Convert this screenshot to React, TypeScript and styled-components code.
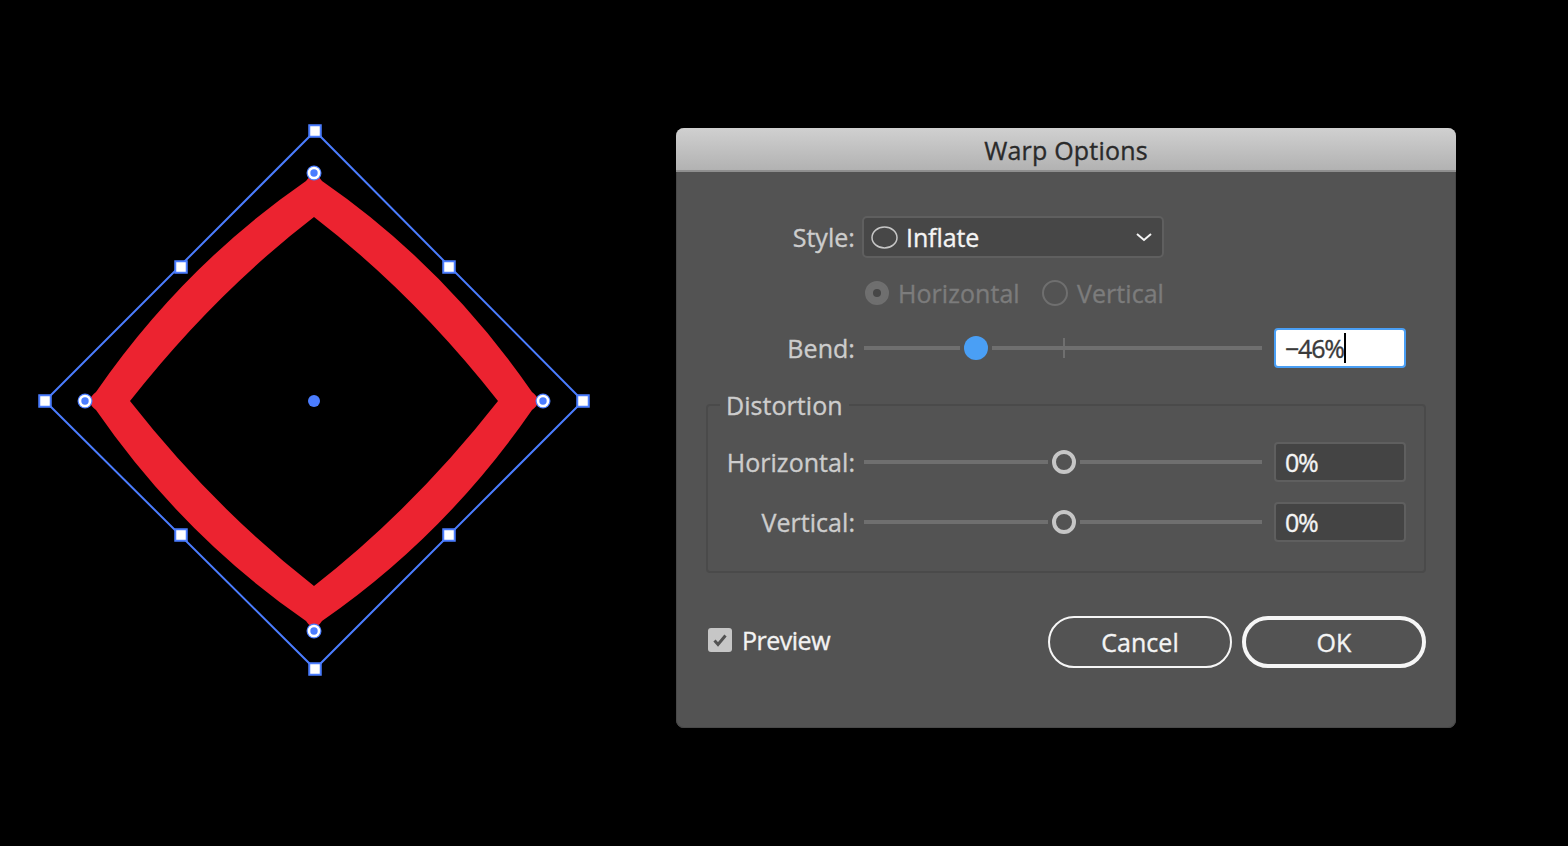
import React from 'react'
import styled, { createGlobalStyle } from 'styled-components'

const GlobalStyle = createGlobalStyle`
  html, body {
    margin: 0;
    padding: 0;
    background: #000;
  }
`

const BLUE = '#4b7dff'

const Page = styled.div`
  display: flex;
  align-items: flex-start;
  width: 1568px;
  height: 846px;
  overflow: hidden;
  background: #000;
  font-family: 'Open Sans', 'Noto Sans', sans-serif;
  letter-spacing: 0.05px;
  -webkit-text-stroke: 0.35px;
`

const Artboard = styled.svg`
  display: block;
  flex: none;
  width: 640px;
  height: 846px;
`

const Dialog = styled.div`
  flex: none;
  box-sizing: border-box;
  width: 780px;
  height: 600px;
  margin: 128px 0 0 36px;
  border-radius: 8px;
  overflow: hidden;
  background: #535353;
  box-shadow: inset 0 0 0 1px #484848;
`

const TitleBar = styled.div`
  box-sizing: border-box;
  height: 44px;
  border-bottom: 2px solid #8f8f8f;
  background: linear-gradient(#d0d0d0, #b2b2b2);
  color: #2a2a2a;
  font-size: 25px;
  letter-spacing: 0.2px;
  line-height: 45px;
  text-align: center;
`

const Body = styled.div`
  padding: 44px 30px 0;
`

const Row = styled.div<{ $top?: number }>`
  display: flex;
  align-items: center;
  margin-top: ${(p) => p.$top ?? 0}px;
`

const Label = styled.div<{ $width?: number }>`
  flex: none;
  width: ${(p) => p.$width ?? 149}px;
  margin-right: 8px;
  color: #cdcdcd;
  font-size: 25px;
  line-height: 32px;
  text-align: right;
`

const SelectBox = styled.div`
  display: flex;
  align-items: center;
  box-sizing: border-box;
  width: 302px;
  height: 42px;
  margin-left: -1px;
  padding: 0 9px 0 7px;
  border: 2px solid #5f5f5f;
  border-radius: 5px;
  background: #474747;
  color: #f4f4f4;
  font-size: 25px;
`

const SelectText = styled.span`
  flex: 1;
  margin-left: 8px;
  letter-spacing: -0.1px;
  line-height: 38px;
`

const RadioGroup = styled.div`
  display: flex;
  align-items: center;
  margin-left: 159px;
`

const RadioDot = styled.span<{ $checked?: boolean }>`
  display: flex;
  flex: none;
  align-items: center;
  justify-content: center;
  box-sizing: border-box;
  width: ${(p) => (p.$checked ? 24 : 26)}px;
  height: ${(p) => (p.$checked ? 24 : 26)}px;
  border: 2px solid #6f6f6f;
  border-radius: 50%;
  background: ${(p) => (p.$checked ? '#6f6f6f' : 'transparent')};

  &::after {
    content: '';
    display: ${(p) => (p.$checked ? 'block' : 'none')};
    width: 8px;
    height: 8px;
    border-radius: 50%;
    background: #474747;
  }
`

const RadioText = styled.span<{ $width: number }>`
  width: ${(p) => p.$width}px;
  margin-left: 9px;
  color: #7c7c7c;
  font-size: 25px;
  line-height: 24px;
`

const Slider = styled.div`
  position: relative;
  display: flex;
  flex: none;
  align-items: center;
  width: 398px;
  margin-left: 1px;
  height: 24px;
`

const Track = styled.span<{ $width?: number }>`
  display: block;
  flex: ${(p) => (p.$width ? `0 0 ${p.$width}px` : '1')};
  height: 4px;
  background: #6f6f6f;
`

const Thumb = styled.span<{ $active?: boolean }>`
  flex: none;
  box-sizing: border-box;
  width: 24px;
  height: 24px;
  margin: 0 4px;
  border-radius: 50%;
  border: ${(p) => (p.$active ? 'none' : '4px solid #c6c6c6')};
  background: ${(p) => (p.$active ? '#4a9ff5' : 'transparent')};
`

const Tick = styled.span<{ $left: number }>`
  position: absolute;
  top: 2px;
  left: ${(p) => p.$left}px;
  width: 2px;
  height: 20px;
  background: #6f6f6f;
`

const NumberField = styled.div<{ $focused?: boolean }>`
  display: flex;
  align-items: center;
  flex: none;
  box-sizing: border-box;
  width: 132px;
  height: 40px;
  margin-left: 12px;
  padding-left: 9px;
  border: 2px solid ${(p) => (p.$focused ? '#4a9ff5' : '#5f5f5f')};
  border-radius: 4px;
  background: ${(p) => (p.$focused ? '#fff' : '#444')};
  color: ${(p) => (p.$focused ? '#3a3a3a' : '#f4f4f4')};
  font-size: 25px;
  letter-spacing: -1.2px;
`

const Caret = styled.span`
  width: 2px;
  height: 30px;
  background: #000;
`

const Group = styled.fieldset`
  box-sizing: border-box;
  margin: 24px 0 0;
  padding: 24px 0 29px;
  min-width: 0;
  border: 2px solid #4a4a4a;
  border-radius: 4px;
`

const GroupTitle = styled.legend`
  margin-left: 12px;
  padding: 0 6px;
  color: #cdcdcd;
  font-size: 25px;
  line-height: 26px;
`

const Footer = styled.div`
  display: flex;
  align-items: center;
  margin-top: 43px;
`

const CheckBox = styled.span`
  display: flex;
  flex: none;
  align-items: center;
  justify-content: center;
  width: 24px;
  height: 24px;
  margin: 0 0 4px 2px;
  border-radius: 3px;
  background: #c6c6c6;
`

const CheckText = styled.span`
  flex: 1;
  margin: 0 0 4px 10px;
  color: #f2f2f2;
  font-size: 25px;
  letter-spacing: -0.5px;
`

const PillButton = styled.button<{ $primary?: boolean }>`
  box-sizing: border-box;
  width: 184px;
  height: 52px;
  margin-left: ${(p) => (p.$primary ? 10 : 0)}px;
  padding: 0;
  border: ${(p) => (p.$primary ? 4 : 2)}px solid #f6f6f6;
  border-radius: 26px;
  background: transparent;
  color: #f4f4f4;
  font-family: inherit;
  letter-spacing: inherit;
  font-size: 25px;
`

const Handle = ({ x, y }: { x: number; y: number }) => (
  <rect x={x - 5.75} y={y - 5.75} width={11.5} height={11.5} fill='#fff' stroke={BLUE} strokeWidth={2} />
)

const Anchor = ({ x, y }: { x: number; y: number }) => (
  <g>
    <circle cx={x} cy={y} r={7.5} fill={BLUE} />
    <circle cx={x} cy={y} r={6.3} fill='#fff' />
    <circle cx={x} cy={y} r={3.7} fill={BLUE} />
  </g>
)

const handles = [
  [315, 131],
  [449, 267],
  [583, 401],
  [449, 535],
  [315, 669],
  [181, 535],
  [45, 401],
  [181, 267],
]

const anchors = [
  [314, 173],
  [543, 401],
  [314, 631],
  [85, 401],
]

const outerShape =
  'M306 181 Q314 169 322 181 Q445 266 532 392 Q544 401 532 410 Q445 536 322 621 Q314 633 306 621 Q183 536 96 410 Q84 401 96 392 Q183 266 306 181 Z'
const innerShape =
  'M314 217 Q414 294 498 401 Q414 508 314 586 Q214 508 130 401 Q214 294 314 217 Z'

const App = () => {
  return (
    <Page>
      <GlobalStyle />
      <Artboard viewBox='0 0 640 846'>
        <path d={`${outerShape} ${innerShape}`} fill='#ec2330' fillRule='evenodd' />
        <path d='M315 131 L583 401 L315 669 L45 401 Z' fill='none' stroke={BLUE} strokeWidth={2} />
        {handles.map(([x, y]) => (
          <Handle key={`${x}-${y}`} x={x} y={y} />
        ))}
        {anchors.map(([x, y]) => (
          <Anchor key={`${x}-${y}`} x={x} y={y} />
        ))}
        <circle cx={314} cy={401} r={6} fill={BLUE} />
      </Artboard>

      <Dialog>
        <TitleBar>Warp Options</TitleBar>
        <Body>
          <Row>
            <Label>Style:</Label>
            <SelectBox>
              <svg width='27' height='23' viewBox='0 0 27 23'>
                <ellipse cx='13.5' cy='11.5' rx='12.5' ry='10.5' fill='none' stroke='#c6c6c6' strokeWidth='1.5' />
              </svg>
              <SelectText>Inflate</SelectText>
              <svg width='18' height='10' viewBox='0 0 18 10'>
                <path d='M2 2 L9 8 L16 2' fill='none' stroke='#f4f4f4' strokeWidth='2' />
              </svg>
            </SelectBox>
          </Row>
          <Row $top={22}>
            <RadioGroup>
              <RadioDot $checked />
              <RadioText $width={144}>Horizontal</RadioText>
              <RadioDot />
              <RadioText $width={90}>Vertical</RadioText>
            </RadioGroup>
          </Row>
          <Row $top={22}>
            <Label>Bend:</Label>
            <Slider>
              <Track $width={96} />
              <Thumb $active />
              <Track />
              <Tick $left={199} />
            </Slider>
            <NumberField $focused>
              −46%
              <Caret />
            </NumberField>
          </Row>
          <Group>
            <GroupTitle>Distortion</GroupTitle>
            <Row>
              <Label $width={147}>Horizontal:</Label>
              <Slider>
                <Track $width={184} />
                <Thumb />
                <Track />
              </Slider>
              <NumberField>0%</NumberField>
            </Row>
            <Row $top={20}>
              <Label $width={147}>Vertical:</Label>
              <Slider>
                <Track $width={184} />
                <Thumb />
                <Track />
              </Slider>
              <NumberField>0%</NumberField>
            </Row>
          </Group>
          <Footer>
            <CheckBox>
              <svg width='16' height='14' viewBox='0 0 16 14'>
                <path d='M2.5 7.5 L6 11.5 L13.5 2.5' fill='none' stroke='#535353' strokeWidth='3' />
              </svg>
            </CheckBox>
            <CheckText>Preview</CheckText>
            <PillButton>Cancel</PillButton>
            <PillButton $primary>OK</PillButton>
          </Footer>
        </Body>
      </Dialog>
    </Page>
  )
}

export default App
